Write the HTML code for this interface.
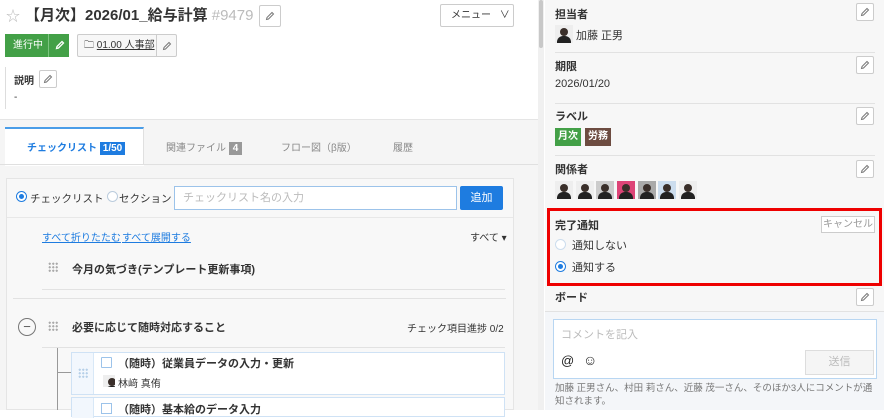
<!DOCTYPE html>
<html><head><meta charset="utf-8"><style>
*{box-sizing:border-box;margin:0;padding:0}
body{width:884px;height:410px;overflow:hidden;position:relative;background:#fff;font-family:"Liberation Sans","Noto Sans CJK JP",sans-serif;color:#333;font-size:11px}
.a{position:absolute;white-space:nowrap}
.pb{position:absolute;width:18px;height:18px;border:1px solid #ccc;background:#fff;border-radius:2px;display:flex;align-items:center;justify-content:center}
.pb svg{width:10px;height:10px}
.h{font-weight:bold;font-size:11px;color:#333}
.line{position:absolute;height:1px;background:#e2e2e2}
.av{position:absolute;width:18px;height:18px;background:#ddd;overflow:hidden}
.av::after{content:"";position:absolute;left:5px;top:3px;width:8px;height:8px;border-radius:50%;background:#3a2f2a}
.av::before{content:"";position:absolute;left:2px;top:11px;width:14px;height:10px;border-radius:6px 6px 0 0;background:#222}
.drag{position:absolute;width:10px;height:10px;background-image:radial-gradient(circle,#aaa 1px,transparent 1.2px);background-size:3.5px 3.5px}
</style></head><body>
<svg width="0" height="0" style="position:absolute"><defs><symbol id="pen" viewBox="0 0 10 10"><path d="M1.5 8.5 L2 6.5 L7 1.5 L8.5 3 L3.5 8 Z" fill="none" stroke="#777" stroke-width="1"/></symbol></defs></svg>

<!-- left top -->
<div class="a" style="left:6px;top:6px;font-size:14px;color:#bbb">☆</div>
<div class="a" style="left:25px;top:5px;font-size:15px;font-weight:bold;color:#333;line-height:22px">【月次】2026/01_給与計算 <span style="color:#bbb;font-weight:normal;font-size:15px">#9479</span></div>
<div class="pb" style="left:259px;top:5px;width:22px;height:22px"><svg><use href="#pen"/></svg></div>
<div class="a" style="left:440px;top:4px;width:74px;height:23px;border:1px solid #ccc;border-radius:2px;font-size:10px;line-height:21px;padding-left:10px">メニュー <span style="margin-left:6px">∨</span></div>
<div class="a" style="left:5px;top:34px;width:64px;height:23px;background:#43a047;color:#fff;font-size:10px;line-height:23px;padding-left:8px">進行中<span style="position:absolute;left:43px;top:0;width:1px;height:23px;background:#7cc47f"></span><svg style="position:absolute;left:50px;top:6px;width:10px;height:10px" viewBox="0 0 10 10"><path d="M1.5 8.5 L2 6.5 L7 1.5 L8.5 3 L3.5 8 Z" fill="none" stroke="#fff" stroke-width="1.3"/></svg></div>
<div class="a" style="left:77px;top:34px;width:100px;height:23px;border:1px solid #ccc;background:#f7f7f7;border-radius:2px;font-size:10px;line-height:21px;padding-left:6px">🗀 <span style="text-decoration:underline">01.00 人事部</span><span style="position:absolute;left:78px;top:0;width:1px;height:21px;background:#ccc"></span><svg style="position:absolute;left:84px;top:6px;width:10px;height:10px"><use href="#pen"/></svg></div>
<div class="a" style="left:5px;top:67px;width:1px;height:42px;background:#ddd"></div>
<div class="a h" style="left:14px;top:72px;font-size:10px">説明</div>
<div class="pb" style="left:39px;top:70px"><svg><use href="#pen"/></svg></div>
<div class="a" style="left:14px;top:92px;font-size:10px">-</div>

<!-- tabs -->
<div class="a" style="left:0;top:119px;width:540px;height:291px;background:#f5f5f5;border-top:1px solid #e5e5e5"></div>
<div class="a" style="left:5px;top:127px;width:139px;height:39px;background:#fff;border-top:2px solid #4a9de8;border-right:1px solid #e0e0e0"></div>
<div class="a" style="left:0;top:164px;width:540px;height:1px;background:#e0e0e0"></div>
<div class="a" style="left:5px;top:165px;width:139px;height:1px;background:#fff"></div>
<div class="a" style="left:27px;top:139px;font-size:10px;color:#1e7ce0;font-weight:bold">チェックリスト <span style="background:#1e7ce0;color:#fff;padding:1px 3px">1/50</span></div>
<div class="a" style="left:166px;top:139px;font-size:10px;color:#888">関連ファイル <span style="background:#999;color:#fff;padding:1px 4px;font-weight:bold">4</span></div>
<div class="a" style="left:281px;top:139px;font-size:10px;color:#888">フロー図（β版）</div>
<div class="a" style="left:393px;top:139px;font-size:10px;color:#888">履歴</div>

<!-- checklist panel -->
<div class="a" style="left:6px;top:178px;width:508px;height:232px;background:#f8f8f8;border:1px solid #e5e5e5"></div>
<div class="a" style="left:16px;top:191px;width:11px;height:11px;border-radius:50%;border:1px solid #1e7ce0;background:#fff"><div style="margin:2px;width:5px;height:5px;border-radius:50%;background:#1e7ce0"></div></div>
<div class="a" style="left:30px;top:191px;font-size:10.5px">チェックリスト</div>
<div class="a" style="left:107px;top:191px;width:11px;height:11px;border-radius:50%;border:1px solid #bcd;background:#fff"></div>
<div class="a" style="left:119px;top:191px;font-size:10.5px">セクション</div>
<div class="a" style="left:174px;top:186px;width:283px;height:24px;border:1px solid #9cc3ea;background:#fff;font-size:11px;color:#bbb;line-height:22px;padding-left:8px">チェックリスト名の入力</div>
<div class="a" style="left:460px;top:186px;width:43px;height:24px;background:#1e7ce0;color:#fff;font-size:11px;line-height:24px;text-align:center;border-radius:2px">追加</div>
<div class="line" style="left:7px;top:217px;width:506px;background:#e8e8e8"></div>
<div class="a" style="left:42px;top:229px;font-size:10px;color:#1e7ce0;text-decoration:underline">すべて折りたたむ</div>
<div class="a" style="left:122px;top:229px;font-size:10px;color:#1e7ce0;text-decoration:underline">すべて展開する</div>
<div class="a" style="left:470px;top:229px;font-size:10px">すべて ▾</div>
<div class="drag" style="left:48px;top:262px"></div>
<div class="a h" style="left:72px;top:261px;font-size:11px">今月の気づき(テンプレート更新事項)</div>
<div class="line" style="left:42px;top:289px;width:463px"></div>
<div class="line" style="left:13px;top:298px;width:493px"></div>
<div class="a" style="left:18px;top:318px;width:18px;height:18px;border-radius:50%;border:1px solid #777;text-align:center;line-height:15px;font-size:13px;color:#555">−</div>
<div class="drag" style="left:48px;top:321px"></div>
<div class="a h" style="left:72px;top:319px;font-size:11px">必要に応じて随時対応すること</div>
<div class="a" style="left:407px;top:320px;font-size:10px">チェック項目進捗 0/2</div>
<div class="line" style="left:42px;top:347px;width:463px"></div>
<div class="a" style="left:57px;top:348px;width:1px;height:62px;background:#999"></div>
<div class="a" style="left:57px;top:372px;width:14px;height:1px;background:#999"></div>
<div class="a" style="left:71px;top:352px;width:434px;height:43px;border:1px solid #cfe2f5;background:#fff"><div style="position:absolute;left:0;top:0;width:22px;height:41px;background:#f2f7fd;border-right:1px solid #d8e8f7"></div></div>
<div class="drag" style="left:78px;top:368px;background-image:radial-gradient(circle,#b5cfe8 1px,transparent 1.2px)"></div>
<div class="a" style="left:101px;top:357px;width:11px;height:11px;border:1px solid #9cc3ea;background:#fff;border-radius:1px"></div>
<div class="a h" style="left:118px;top:355px;font-size:11px">（随時）従業員データの入力・更新</div>
<div class="av" style="left:103px;top:375px;width:12px;height:12px;background:#eee"></div>
<div class="a" style="left:118px;top:375px;font-size:10px">林﨑 真侑</div>
<div class="a" style="left:71px;top:397px;width:434px;height:20px;border:1px solid #cfe2f5;background:#fff"><div style="position:absolute;left:0;top:0;width:22px;height:20px;background:#f2f7fd;border-right:1px solid #d8e8f7"></div></div>
<div class="a" style="left:101px;top:403px;width:11px;height:11px;border:1px solid #9cc3ea;background:#fff"></div>
<div class="a h" style="left:118px;top:401px;font-size:11px">（随時）基本給のデータ入力</div>

<!-- scrollbar -->
<div class="a" style="left:538px;top:0;width:6px;height:410px;background:#f0f0f0"></div>
<div class="a" style="left:539px;top:0;width:4px;height:48px;background:#c8c8c8;border-radius:2px"></div>

<!-- right panel -->
<div class="a" style="left:545px;top:0;width:339px;height:410px;background:#f7f7f7"></div>
<div class="a h" style="left:555px;top:6px">担当者</div>
<div class="pb" style="left:856px;top:3px"><svg><use href="#pen"/></svg></div>
<div class="av" style="left:555px;top:25px;background:#eee"></div>
<div class="a" style="left:576px;top:27px;font-size:11px">加藤 正男</div>
<div class="line" style="left:555px;top:52px;width:320px"></div>
<div class="a h" style="left:555px;top:58px">期限</div>
<div class="pb" style="left:856px;top:56px"><svg><use href="#pen"/></svg></div>
<div class="a" style="left:555px;top:78px;font-size:11px">2026/01/20</div>
<div class="line" style="left:555px;top:103px;width:320px"></div>
<div class="a h" style="left:555px;top:108px">ラベル</div>
<div class="pb" style="left:856px;top:107px"><svg><use href="#pen"/></svg></div>
<div class="a" style="left:555px;top:128px;width:26px;height:18px;background:#43a047;color:#fff;font-size:10px;font-weight:bold;line-height:18px;text-align:center">月次</div>
<div class="a" style="left:585px;top:128px;width:26px;height:18px;background:#6d4c41;color:#fff;font-size:10px;font-weight:bold;line-height:18px;text-align:center">労務</div>
<div class="line" style="left:555px;top:155px;width:320px"></div>
<div class="a h" style="left:555px;top:161px">関係者</div>
<div class="pb" style="left:856px;top:160px"><svg><use href="#pen"/></svg></div>
<div class="av" style="left:555px;top:181px;background:#eee"></div>
<div class="av" style="left:576px;top:181px;background:#eee"></div>
<div class="av" style="left:596px;top:181px;background:#ccc"></div>
<div class="av" style="left:617px;top:181px;background:#d47"></div>
<div class="av" style="left:638px;top:181px;background:#aaa"></div>
<div class="av" style="left:658px;top:181px;background:#cde"></div>
<div class="av" style="left:679px;top:181px;background:#eee"></div>

<div class="a" style="left:547px;top:208px;width:335px;height:78px;border:3px solid #e00;background:#f7f7f7"></div>
<div class="a h" style="left:555px;top:217px">完了通知</div>
<div class="a" style="left:821px;top:216px;width:54px;height:17px;border:1px solid #ccc;background:#fff;font-size:10px;color:#999;text-align:center;line-height:15px">キャンセル</div>
<div class="a" style="left:555px;top:239px;width:11px;height:11px;border-radius:50%;border:1px solid #cde;background:#fff"></div>
<div class="a" style="left:572px;top:237px;font-size:11px">通知しない</div>
<div class="a" style="left:555px;top:261px;width:11px;height:11px;border-radius:50%;border:1px solid #1e7ce0;background:#fff"><div style="margin:2px;width:5px;height:5px;border-radius:50%;background:#1e7ce0"></div></div>
<div class="a" style="left:572px;top:259px;font-size:11px">通知する</div>
<div class="a h" style="left:555px;top:289px">ボード</div>
<div class="pb" style="left:856px;top:288px"><svg><use href="#pen"/></svg></div>
<div class="line" style="left:545px;top:311px;width:339px"></div>
<div class="a" style="left:545px;top:312px;width:339px;height:98px;background:#f4f6f9"></div>
<div class="a" style="left:553px;top:319px;width:324px;height:60px;border:1px solid #b8d6f2;background:#fff"></div>
<div class="a" style="left:561px;top:326px;font-size:11px;color:#bbb">コメントを記入</div>
<div class="a" style="left:561px;top:353px;font-size:13px;color:#222">@</div>
<div class="a" style="left:583px;top:352px;font-size:14px;color:#222">☺</div>
<div class="a" style="left:805px;top:350px;width:69px;height:25px;border:1px solid #ddd;background:#f5f5f5;font-size:11px;color:#bbb;text-align:center;line-height:23px">送信</div>
<div class="a" style="left:555px;top:382px;width:320px;font-size:9.5px;color:#777;line-height:13px;white-space:normal">加藤 正男さん、村田 莉さん、近藤 茂一さん、そのほか3人にコメントが通知されます。</div>
</body></html>
